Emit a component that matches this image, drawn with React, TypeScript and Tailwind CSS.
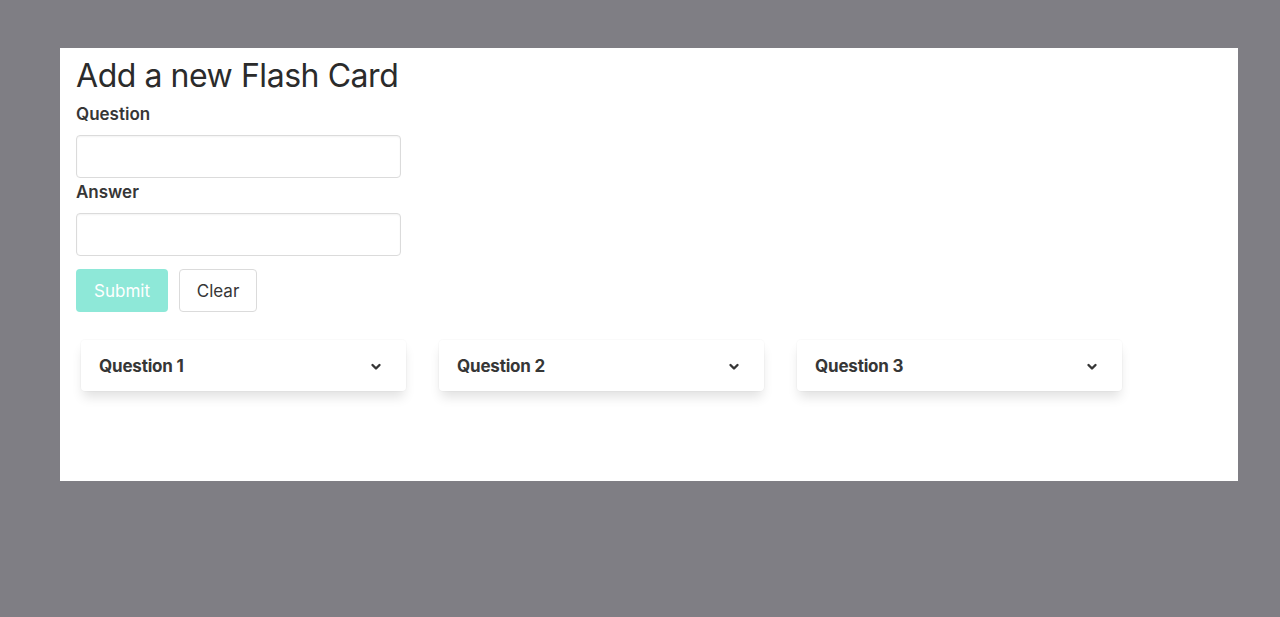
import React from "react";

function Chevron() {
  return (
    <svg width="12" height="12" viewBox="0 0 12 12" fill="none">
      <path d="M2.5 4l3.5 3.5L9.5 4" stroke="#363636" strokeWidth="2.4" strokeLinecap="round" strokeLinejoin="round" />
    </svg>
  );
}

export default function App() {
  const cards = ["Question 1", "Question 2", "Question 3"];
  return (
    <div className="min-h-[617px] w-full bg-[#7f7e84] pt-[48px] pl-[60px] pr-[42px]" style={{ fontFamily: "Inter, 'Noto Sans', sans-serif" }}>
      <div className="bg-white h-[433px] px-[16px] pt-[7px] text-[#363636]">
        <h1 className="text-[32px] leading-[42px] font-normal text-[#2b2b2b] tracking-[-0.45px]">Add a new Flash Card</h1>
        <label className="block mt-[7px] text-[17px] leading-[20px] font-semibold">Question</label>
        <input className="mt-[11px] block w-[325px] h-[43px] border border-[#dbdbdb] rounded-[4px] shadow-[inset_0_1px_2px_rgba(10,10,10,0.05)]" />
        <label className="block mt-[4px] text-[17px] leading-[20px] font-semibold">Answer</label>
        <input className="mt-[11px] block w-[325px] h-[43px] border border-[#dbdbdb] rounded-[4px] shadow-[inset_0_1px_2px_rgba(10,10,10,0.05)]" />
        <div className="flex gap-[11px] mt-[13px]">
          <button className="w-[92px] h-[43px] pt-[3px] rounded-[4px] bg-[#8ee8d8] text-white text-[17px]">Submit</button>
          <button className="w-[78px] h-[43px] pt-[3px] rounded-[4px] border border-[#dbdbdb] bg-white text-[#363636] text-[17px]">Clear</button>
        </div>
        <div className="flex gap-[33px] mt-[28px] pl-[5px]">
          {cards.map((c) => (
            <div key={c} className="w-[325px] h-[51px] pt-[2px] rounded-[4px] bg-white shadow-[0_8px_12px_-2px_rgba(10,10,10,0.12),0_0_0_1px_rgba(10,10,10,0.02)] flex items-center justify-between pl-[18px] pr-[24px]">
              <span className="text-[17px] font-bold tracking-[-0.2px]">{c}</span>
              <Chevron />
            </div>
          ))}
        </div>
      </div>
    </div>
  );
}
